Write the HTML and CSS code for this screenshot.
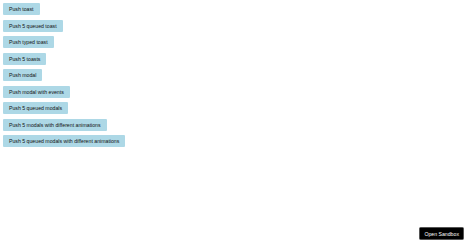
FILE: index.html
```html
<!DOCTYPE html>
<html>
<head>
<meta charset="utf-8">
<link rel="stylesheet" href="styles.css">
</head>
<body>
<div class="list">
  <button class="btn">Push toast</button>
  <button class="btn">Push 5 queued toast</button>
  <button class="btn">Push typed toast</button>
  <button class="btn">Push 5 toasts</button>
  <button class="btn">Push modal</button>
  <button class="btn">Push modal with events</button>
  <button class="btn">Push 5 queued modals</button>
  <button class="btn">Push 5 modals with different animations</button>
  <button class="btn">Push 5 queued modals with different animations</button>
</div>
<button class="sandbox">Open Sandbox</button>
</body>
</html>
```
FILE: styles.css
```css
html, body {
  margin: 0;
  padding: 0;
  background: #fff;
}
body {
  padding: 3px;
  font-family: "Liberation Sans", Arial, sans-serif;
}
.list {
  display: flex;
  flex-direction: column;
  align-items: flex-start;
  gap: 4.5px;
}
.btn {
  height: 12px;
  padding: 0 6px;
  border: none;
  border-radius: 1px;
  background: #add8e6;
  color: #111;
  font-family: "Liberation Sans", Arial, sans-serif;
  font-size: 5.2px;
  line-height: 12px;
  white-space: nowrap;
}
.sandbox {
  position: fixed;
  right: 10px;
  bottom: 8px;
  height: 13px;
  padding: 0 4px;
  background: #000;
  color: #fff;
  border: 0.5px solid #555;
  border-radius: 1.5px;
  font-family: "Liberation Sans", Arial, sans-serif;
  font-size: 5.2px;
  line-height: 12px;
}
```
